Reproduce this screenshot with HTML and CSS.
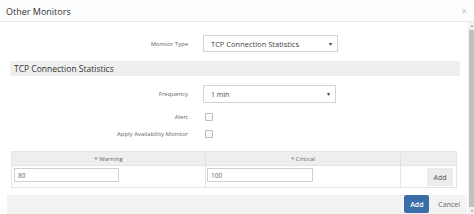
FILE: index.html
```html
<!DOCTYPE html>
<html>
<head>
<meta charset="utf-8">
<link rel="stylesheet" href="styles.css">
</head>
<body>
<div class="modal">
  <div class="header">
    <span class="title">Other Monitors</span>
    <span class="close">×</span>
  </div>
  <div class="main">
    <div class="content">
      <div class="row row-type">
        <label class="lbl">Monitor Type</label>
        <div class="select sel-type"><span>TCP Connection Statistics</span><span class="caret">▾</span></div>
      </div>
      <div class="section">TCP Connection Statistics</div>
      <div class="row row-freq">
        <label class="lbl">Frequency</label>
        <div class="select sel-freq"><span>1 min</span><span class="caret">▾</span></div>
      </div>
      <div class="row row-check">
        <label class="lbl">Alert</label>
        <span class="checkbox"></span>
      </div>
      <div class="row row-check row-check2">
        <label class="lbl">Apply Availability Monitor</label>
        <span class="checkbox"></span>
      </div>
      <div class="table">
        <div class="th c1">* Warning</div>
        <div class="th c2">* Critical</div>
        <div class="th c3"></div>
        <div class="td c1"><div class="input w-in">80</div></div>
        <div class="td c2"><div class="input w-in">100</div></div>
        <div class="td c3 td-btn"><span class="btn-add">Add</span></div>
      </div>
      <div class="footer">
        <span class="btn-primary">Add</span>
        <span class="btn-cancel">Cancel</span>
      </div>
    </div>
    <div class="scrollbar">
      <span class="arrow up"></span>
      <span class="thumb"></span>
      <span class="arrow down"></span>
    </div>
  </div>
</div>
</body>
</html>
```
FILE: styles.css
```css
html, body {
  margin: 0;
  padding: 0;
  background: #fff;
}
body {
  font-family: "Open Sans", "Liberation Sans", sans-serif;
  color: #555;
}
.modal {
  width: 474px;
  height: 214px;
  overflow: hidden;
  display: flex;
  flex-direction: column;
}
.header {
  height: 22px;
  flex: none;
  border-bottom: 1px solid #e6e6e6;
  display: flex;
  align-items: center;
  justify-content: space-between;
  padding: 0 6px 0 6px;
  box-sizing: border-box;
  background: #fdfdfd;
}
.title {
  font-size: 9px;
  color: #333;
  margin-top: 1px;
}
.close {
  font-size: 10px;
  color: #c4c4c4;
  margin-right: 1px;
}
.main {
  flex: 1;
  display: flex;
  min-height: 0;
}
.content {
  flex: 1;
  display: flex;
  flex-direction: column;
}
.row {
  display: flex;
  align-items: center;
}
.lbl {
  width: 188px;
  text-align: right;
  font-size: 6px;
  color: #666;
  margin-right: 15px;
}
.row-type {
  margin-top: 13px;
  height: 17px;
}
.select {
  height: 17px;
  box-sizing: border-box;
  border: 1px solid #d4d4d4;
  display: flex;
  align-items: center;
  justify-content: space-between;
  padding: 0 5px 0 7px;
  font-size: 7.5px;
  color: #444;
  background: #fff;
}
.sel-type { width: 135px; }
.sel-freq { width: 133px; height: 18px; font-size: 7px; }
.caret {
  font-size: 6px;
  color: #444;
}
.section {
  margin: 9px 8px 0 10px;
  height: 15px;
  background: #eeeeee;
  font-size: 8.5px;
  color: #333;
  display: flex;
  align-items: center;
  padding-left: 4px;
}
.row-freq {
  margin-top: 9px;
  height: 18px;
}
.row-check {
  margin-top: 10px;
  height: 7px;
}
.row-check2 {
  margin-top: 10px;
}
.checkbox {
  display: inline-block;
  width: 6px;
  height: 6px;
  border: 1px solid #bbb;
  border-radius: 1px;
  margin-left: 2px;
  background: #fafafa;
}
.table {
  margin: 14px 11px 0 11px;
  display: grid;
  grid-template-columns: 194px 195px 55px;
  border: 1px solid #e4e4e4;
}
.th {
  height: 13px;
  background: #eeeeee;
  border-bottom: 1px solid #e4e4e4;
  font-size: 6px;
  color: #666;
  display: flex;
  align-items: center;
  justify-content: center;
}
.td {
  height: 21px;
  display: flex;
  align-items: center;
}
.c1, .c2 { border-right: 1px solid #e4e4e4; }
.input {
  height: 14px;
  width: 105px;
  box-sizing: border-box;
  border: 1px solid #cfcfcf;
  font-size: 6.5px;
  color: #666;
  display: flex;
  align-items: center;
  padding-left: 3px;
  margin-left: 2px;
  margin-top: -3px;
}
.c2 .input { width: 106px; margin-left: 1px; }
.td-btn {
  justify-content: flex-end;
  padding-right: 3px;
}
.btn-add {
  width: 26px;
  height: 18px;
  background: #ececec;
  font-size: 7px;
  color: #555;
  display: flex;
  align-items: center;
  justify-content: center;
  margin-top: 1px;
}
.footer {
  margin: 7px 1px 0 7px;
  flex: 1;
  background: #f3f3f3;
  display: flex;
  align-items: flex-end;
  justify-content: flex-end;
  padding: 0 7px 1px 0;
}
.btn-primary {
  width: 25px;
  height: 18px;
  background: #3a6ea6;
  border-radius: 2px;
  color: #fff;
  font-size: 7px;
  font-weight: 600;
  display: flex;
  align-items: center;
  justify-content: center;
}
.btn-cancel {
  font-size: 7px;
  color: #666;
  margin-left: 9px;
  height: 18px;
  display: flex;
  align-items: center;
}
.scrollbar {
  width: 8px;
  flex: none;
  background: #f1f1f1;
  display: flex;
  flex-direction: column;
  align-items: center;
}
.arrow {
  width: 0;
  height: 0;
  border-left: 1.5px solid transparent;
  border-right: 1.5px solid transparent;
  margin: 2px 0;
}
.up { border-bottom: 2px solid #777; margin-top: 3px; }
.down { border-top: 2px solid #777; margin-bottom: 2px; }
.thumb {
  width: 6px;
  flex: 1;
  background: #c1c1c1;
  margin: 1px 0;
}
```
